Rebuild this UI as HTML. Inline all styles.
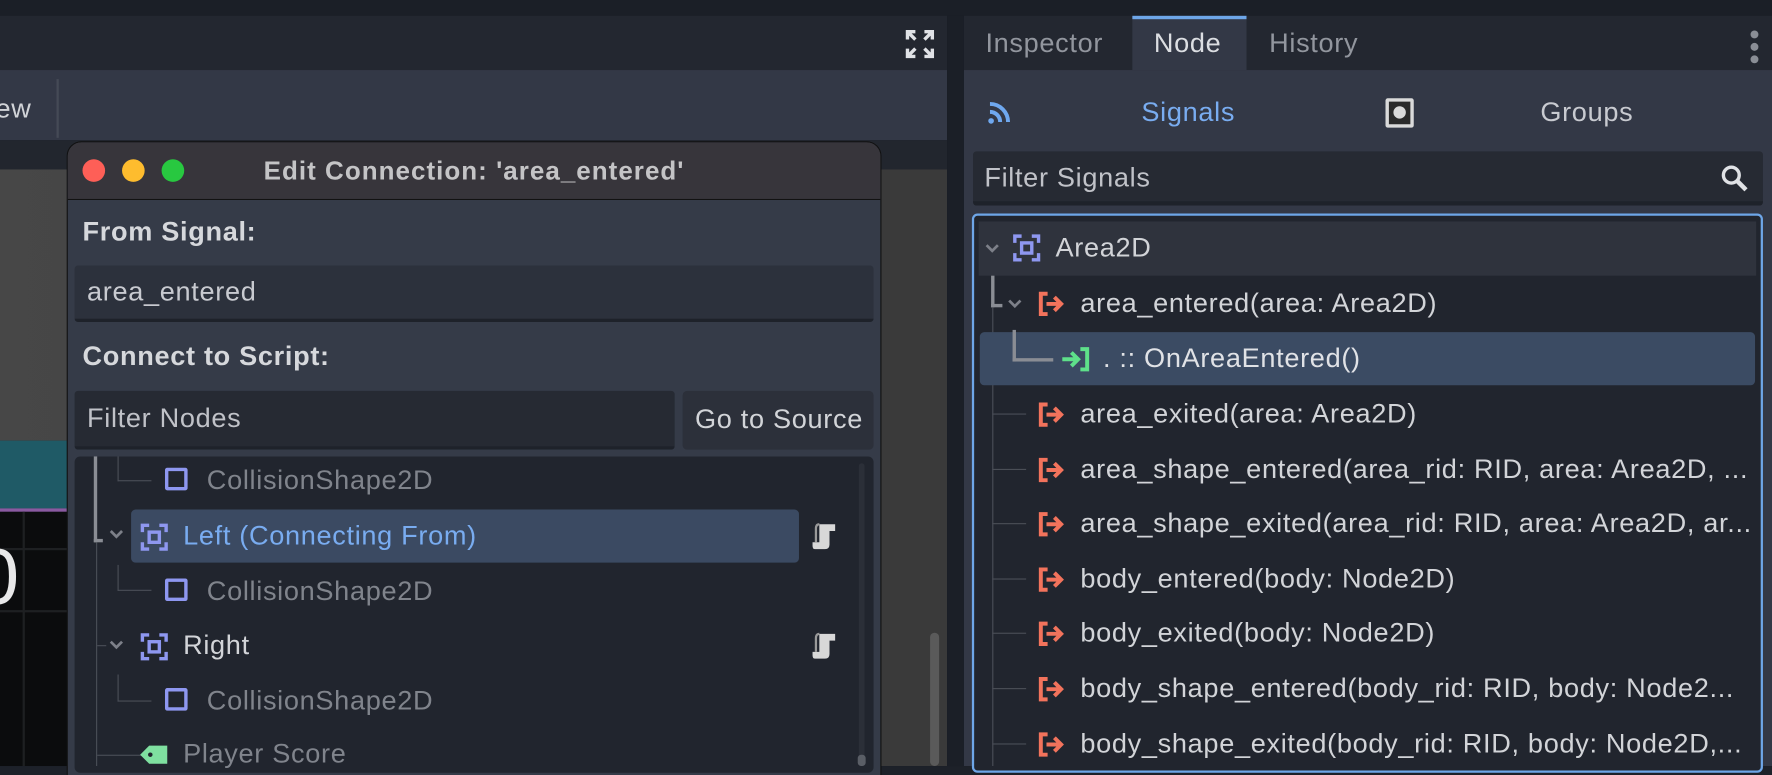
<!DOCTYPE html>
<html><head><meta charset="utf-8"><style>
html,body{margin:0;padding:0;width:1772px;height:766px;overflow:hidden;background:#1d2129;}
#w{position:absolute;left:0;top:0;width:1568px;height:678px;transform:scale(1.1301,1.1298);transform-origin:0 0;font-family:"Liberation Sans","DejaVu Sans",sans-serif;font-size:24px;color:#d2d4d8;}
.a{position:absolute;}
.t{position:absolute;line-height:30px;white-space:nowrap;font-size:24px;letter-spacing:0.6px;}
.b{font-weight:bold;}
.dim{color:#80848c;}
.ln{position:absolute;background:#4a4e57;}
.ico{position:absolute;}
</style></head><body><div id="w">
<div class="a" style="left:0;top:0;width:1568px;height:14px;background:#1b1f27"></div>
<div class="a" style="left:0;top:14px;width:838px;height:48px;background:#232730"></div>
<svg class="ico" style="left:801px;top:26px" width="26" height="26" viewBox="0 0 26 26" fill="none" stroke="#e0e2e6" stroke-width="3"><path d="M2 9V2H9M2 2L9 9M17 2H24V9M24 2L17 9M2 17V24H9M2 24L9 17M24 17V24H17M24 24L17 17"/></svg>
<div class="a" style="left:0;top:62px;width:838px;height:62px;background:#333846"></div>
<div class="t" style="left:-4px;top:82px;color:#d2d4d8">ew</div>
<div class="a" style="left:50px;top:70px;width:2px;height:52px;background:#454a56"></div>
<div class="a" style="left:0;top:124px;width:838px;height:28px;background:#22262e"></div>
<div class="a" style="left:0;top:150px;width:838px;height:240px;background:linear-gradient(90deg,#474747,#3e3e3e)"></div>
<div class="a" style="left:0;top:390px;width:838px;height:60px;background:#1f5a66"></div>
<div class="a" style="left:0;top:450px;width:838px;height:3px;background:#8a5aa0"></div>
<div class="a" style="left:0;top:453px;width:838px;height:225px;background:#0b0c0d"></div>
<div class="a" style="left:0;top:485px;width:838px;height:2px;background:#1e2022"></div>
<div class="a" style="left:0;top:540px;width:838px;height:2px;background:#1e2022"></div>
<div class="a" style="left:20px;top:453px;width:2px;height:225px;background:#1e2022"></div>
<div class="t" style="left:-22px;top:470px;font-size:70px;line-height:80px;color:#e8e8e8">0</div>
<div class="a" style="left:779px;top:150px;width:59px;height:528px;background:#3a3a3a"></div>
<div class="a" style="left:823px;top:560px;width:8px;height:118px;border-radius:4px;background:#5a5a5a"></div>
<div class="a" style="left:838px;top:14px;width:15px;height:664px;background:#1b1f27"></div>

<div class="a" style="left:60px;top:126px;width:719px;height:560px;background:#353b48;border-radius:12px 12px 0 0;box-shadow:0 0 0 1px #111;"></div>
<div class="a" style="left:60px;top:126px;width:719px;height:50px;background:#37353b;border-radius:12px 12px 0 0;border-bottom:1px solid #111"></div>
<div class="a" style="left:73px;top:141px;width:20px;height:20px;border-radius:50%;background:#fe5f57"></div>
<div class="a" style="left:108px;top:141px;width:20px;height:20px;border-radius:50%;background:#febc2e"></div>
<div class="a" style="left:143px;top:141px;width:20px;height:20px;border-radius:50%;background:#28c840"></div>
<div class="t b" style="left:60px;width:719px;text-align:center;top:136px;font-size:23px;letter-spacing:0.9px;color:#c4c4c6">Edit Connection: 'area_entered'</div>
<div class="t b" style="left:73px;top:191px;color:#d6d8dc;font-size:24px;letter-spacing:0.6px">From Signal:</div>
<div class="a" style="left:66px;top:235px;width:707px;height:47px;background:#2c313c;border-bottom:3px solid #1e222a;border-radius:3px"></div>
<div class="t" style="left:77px;top:244px;color:#c8cad0">area_entered</div>
<div class="t b" style="left:73px;top:301px;color:#d6d8dc;font-size:24px;letter-spacing:0.6px">Connect to Script:</div>
<div class="a" style="left:66px;top:346px;width:531px;height:49px;background:#262a33;border-bottom:3px solid #1e222a;border-radius:3px"></div>
<div class="t" style="left:77px;top:356px;color:#c0c2c8">Filter Nodes</div>
<div class="a" style="left:604px;top:346px;width:169px;height:52px;background:#2c303a;border-radius:4px"></div>
<div class="t" style="left:615px;top:357px;color:#d2d4d8">Go to Source</div>
<div class="a" style="left:66px;top:404px;width:707px;height:280px;background:#21252e;border-radius:5px"></div>
<div class="a" style="left:760px;top:410px;width:5px;height:268px;background:#2b2f38;border-radius:3px"></div>
<div class="a" style="left:759px;top:668px;width:7px;height:10px;background:#5a5e66;border-radius:3px"></div>
<div class="a" style="left:83px;top:404px;width:3px;height:76px;background:#8a8d94"></div>
<div class="a" style="left:83px;top:477px;width:8px;height:3px;background:#8a8d94"></div>
<div class="ln" style="left:85px;top:480px;width:1px;height:198px"></div>
<div class="ln" style="left:104px;top:404px;width:1px;height:22px"></div><div class="ln" style="left:104px;top:425px;width:30px;height:1px"></div>
<div class="ln" style="left:104px;top:500px;width:1px;height:23px"></div><div class="ln" style="left:104px;top:522px;width:30px;height:1px"></div>
<div class="ln" style="left:104px;top:597px;width:1px;height:24px"></div><div class="ln" style="left:104px;top:620px;width:30px;height:1px"></div>
<div class="ln" style="left:86px;top:571px;width:8px;height:1px"></div>
<div class="ln" style="left:86px;top:668px;width:40px;height:1px"></div>
<div class="a" style="left:116px;top:451px;width:591px;height:47px;background:#3b4a62;border-radius:4px"></div>
<div class="a" style="left:146px;top:414px;width:20px;height:20px;border:3px solid #8e97f0;box-sizing:border-box;border-radius:2px"></div>
<div class="t dim" style="left:183px;top:411px">CollisionShape2D</div>
<svg class="ico" style="left:96px;top:468px" width="14" height="10" viewBox="0 0 14 10" fill="none" stroke="#7d8089" stroke-width="2.4"><path d="M2 2L7 7L12 2"/></svg>
<svg class="ico" style="left:124px;top:463px" width="25" height="25" viewBox="0 0 25 25" fill="none" stroke="#8e97f0" stroke-width="3"><path d="M2 8V2H8M17 2H23V8M2 17V23H8M17 23H23V17"/><rect x="8" y="8" width="9" height="9"/></svg>
<div class="t" style="left:162px;top:460px;color:#79acf0">Left (Connecting From)</div>
<svg class="ico" style="left:717px;top:462px" width="24" height="26" viewBox="0 0 24 26"><path d="M8 2H22V8H17V20Q17 24 13 24H4Q2 24 2 21V18H8Z" fill="#d8d8d8"/><path d="M8 2Q5 2 5 6V18" stroke="#999" stroke-width="2" fill="none"/></svg>
<div class="a" style="left:146px;top:512px;width:20px;height:20px;border:3px solid #8e97f0;box-sizing:border-box;border-radius:2px"></div>
<div class="t dim" style="left:183px;top:509px">CollisionShape2D</div>
<svg class="ico" style="left:96px;top:566px" width="14" height="10" viewBox="0 0 14 10" fill="none" stroke="#7d8089" stroke-width="2.4"><path d="M2 2L7 7L12 2"/></svg>
<svg class="ico" style="left:124px;top:560px" width="25" height="25" viewBox="0 0 25 25" fill="none" stroke="#8e97f0" stroke-width="3"><path d="M2 8V2H8M17 2H23V8M2 17V23H8M17 23H23V17"/><rect x="8" y="8" width="9" height="9"/></svg>
<div class="t" style="left:162px;top:557px">Right</div>
<svg class="ico" style="left:717px;top:559px" width="24" height="26" viewBox="0 0 24 26"><path d="M8 2H22V8H17V20Q17 24 13 24H4Q2 24 2 21V18H8Z" fill="#d8d8d8"/><path d="M8 2Q5 2 5 6V18" stroke="#999" stroke-width="2" fill="none"/></svg>
<div class="a" style="left:146px;top:609px;width:20px;height:20px;border:3px solid #8e97f0;box-sizing:border-box;border-radius:2px"></div>
<div class="t dim" style="left:183px;top:606px">CollisionShape2D</div>
<svg class="ico" style="left:122px;top:658px" width="28" height="20" viewBox="0 0 28 20"><path d="M2 10L10 2H26V18H10Z" fill="#7fe0a0"/><circle cx="11" cy="10" r="2" fill="#21252e"/></svg>
<div class="t dim" style="left:162px;top:653px">Player Score</div>

<div class="a" style="left:853px;top:14px;width:715px;height:48px;background:#232730"></div>
<div class="a" style="left:1002px;top:14px;width:101px;height:48px;background:#333846;border-top:3px solid #6ea6e8;box-sizing:border-box"></div>
<div class="t" style="left:872px;top:24px;color:#92969e">Inspector</div>
<div class="t" style="left:1021px;top:24px;color:#dcdee2">Node</div>
<div class="t" style="left:1123px;top:24px;color:#92969e">History</div>
<div class="a" style="left:1549px;top:27px;width:7px;height:7px;border-radius:50%;background:#8a8e96"></div>
<div class="a" style="left:1549px;top:38px;width:7px;height:7px;border-radius:50%;background:#8a8e96"></div>
<div class="a" style="left:1549px;top:49px;width:7px;height:7px;border-radius:50%;background:#8a8e96"></div>
<div class="a" style="left:853px;top:62px;width:715px;height:616px;background:#333846"></div>
<svg class="ico" style="left:873px;top:89px" width="22" height="22" viewBox="0 0 22 22" fill="none" stroke="#6fa8ef" stroke-width="3.5"><circle cx="4" cy="18" r="2.5" fill="#6fa8ef" stroke="none"/><path d="M3 10A9 9 0 0 1 12 19M3 3A16 16 0 0 1 19 19"/></svg>
<div class="t" style="left:1010px;top:85px;color:#79acf0">Signals</div>
<div class="a" style="left:1226px;top:87px;width:25px;height:26px;border:3px solid #dadada;box-sizing:border-box;background:#2a2a2a;border-radius:2px"></div>
<div class="a" style="left:1233px;top:94px;width:11px;height:11px;border-radius:50%;background:#dadada"></div>
<div class="t" style="left:1363px;top:85px;color:#c8cad0">Groups</div>
<div class="a" style="left:861px;top:134px;width:699px;height:44px;background:#262a33;border-bottom:4px solid #1e222a;border-radius:3px"></div>
<div class="t" style="left:871px;top:143px;color:#c0c2c8">Filter Signals</div>
<svg class="ico" style="left:1522px;top:145px" width="26" height="26" viewBox="0 0 26 26" fill="none" stroke="#e0e2e6" stroke-width="3"><circle cx="10" cy="10" r="7"/><path d="M15 15L23 23" stroke-width="4"/></svg>
<div class="a" style="left:860px;top:189px;width:700px;height:495px;background:#21252e;border:2px solid #6ea6e8;border-radius:5px;box-sizing:border-box"></div>
<div class="a" style="left:866px;top:196px;width:688px;height:48px;background:#2f333d"></div>
<svg class="ico" style="left:871px;top:215px" width="14" height="10" viewBox="0 0 14 10" fill="none" stroke="#7d8089" stroke-width="2.4"><path d="M2 2L7 7L12 2"/></svg>
<svg class="ico" style="left:896px;top:207px" width="25" height="25" viewBox="0 0 25 25" fill="none" stroke="#8e97f0" stroke-width="3"><path d="M2 8V2H8M17 2H23V8M2 17V23H8M17 23H23V17"/><rect x="8" y="8" width="9" height="9"/></svg>
<div class="t" style="left:934px;top:205px">Area2D</div>
<div class="a" style="left:877px;top:244px;width:3px;height:28px;background:#8a8d94"></div>
<div class="a" style="left:877px;top:269px;width:10px;height:3px;background:#8a8d94"></div>
<div class="ln" style="left:878px;top:272px;width:1px;height:406px"></div>
<svg class="ico" style="left:891px;top:264px" width="14" height="10" viewBox="0 0 14 10" fill="none" stroke="#7d8089" stroke-width="2.4"><path d="M2 2L7 7L12 2"/></svg>
<div class="a" style="left:867px;top:294px;width:686px;height:47px;background:#3b4b63;border-radius:4px"></div>
<div class="a" style="left:896px;top:292px;width:3px;height:28px;background:#8a8d94"></div>
<div class="a" style="left:896px;top:317px;width:36px;height:3px;background:#8a8d94"></div>
<svg class="ico" style="left:939px;top:306px" width="26" height="24" viewBox="0 0 26 24" fill="none" stroke="#5ee08a" stroke-width="3.5"><path d="M17 3H23V21H17"/><path d="M1 12H14M9 6L15 12L9 18"/></svg>
<div class="t" style="left:976px;top:303px;color:#e0e2e6">. :: OnAreaEntered()</div>
<svg width="0" height="0" style="position:absolute"><defs><g id="so" fill="none" stroke="#f2735c" stroke-width="3.5"><path d="M9 3H3V21H9"/><path d="M8 12H21M15 6L21 12L15 18"/></g></defs></svg>
<svg class="ico" style="left:918px;top:257px" width="26" height="24" viewBox="0 0 26 24"><use href="#so"/></svg>
<div class="t" style="left:956px;top:254px">area_entered(area: Area2D)</div>
<div class="ln" style="left:878px;top:366px;width:30px;height:1px"></div>
<svg class="ico" style="left:918px;top:355px" width="26" height="24" viewBox="0 0 26 24"><use href="#so"/></svg>
<div class="t" style="left:956px;top:352px">area_exited(area: Area2D)</div>
<div class="ln" style="left:878px;top:415px;width:30px;height:1px"></div>
<svg class="ico" style="left:918px;top:404px" width="26" height="24" viewBox="0 0 26 24"><use href="#so"/></svg>
<div class="t" style="left:956px;top:401px">area_shape_entered(area_rid: RID, area: Area2D, ...</div>
<div class="ln" style="left:878px;top:463px;width:30px;height:1px"></div>
<svg class="ico" style="left:918px;top:452px" width="26" height="24" viewBox="0 0 26 24"><use href="#so"/></svg>
<div class="t" style="left:956px;top:449px">area_shape_exited(area_rid: RID, area: Area2D, ar...</div>
<div class="ln" style="left:878px;top:512px;width:30px;height:1px"></div>
<svg class="ico" style="left:918px;top:501px" width="26" height="24" viewBox="0 0 26 24"><use href="#so"/></svg>
<div class="t" style="left:956px;top:498px">body_entered(body: Node2D)</div>
<div class="ln" style="left:878px;top:560px;width:30px;height:1px"></div>
<svg class="ico" style="left:918px;top:549px" width="26" height="24" viewBox="0 0 26 24"><use href="#so"/></svg>
<div class="t" style="left:956px;top:546px">body_exited(body: Node2D)</div>
<div class="ln" style="left:878px;top:609px;width:30px;height:1px"></div>
<svg class="ico" style="left:918px;top:598px" width="26" height="24" viewBox="0 0 26 24"><use href="#so"/></svg>
<div class="t" style="left:956px;top:595px">body_shape_entered(body_rid: RID, body: Node2...</div>
<div class="ln" style="left:878px;top:658px;width:30px;height:1px"></div>
<svg class="ico" style="left:918px;top:647px" width="26" height="24" viewBox="0 0 26 24"><use href="#so"/></svg>
<div class="t" style="left:956px;top:644px">body_shape_exited(body_rid: RID, body: Node2D,...</div>
</div></body></html>
